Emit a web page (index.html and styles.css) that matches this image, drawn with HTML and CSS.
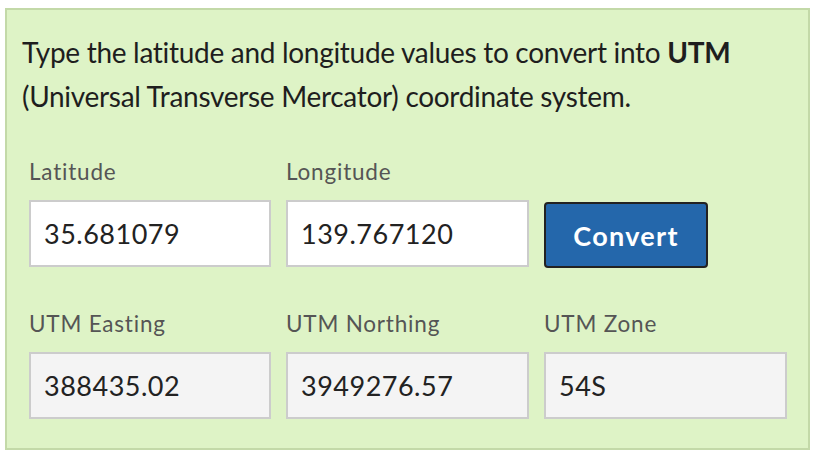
FILE: index.html
```html
<!DOCTYPE html>
<html lang="en">
<head>
  <meta charset="UTF-8" />
  <title>Lat/Long to UTM</title>
  <link rel="stylesheet" href="styles.css">
</head>
<body>
  <div class="converter">
    <p class="intro">Type the latitude and longitude values to convert into <b>UTM</b> (Universal Transverse Mercator) coordinate system.</p>

    <div class="row">
      <div class="field">
        <label for="lat">Latitude</label>
        <input id="lat" type="text" value="35.681079">
      </div>
      <div class="field">
        <label for="lon">Longitude</label>
        <input id="lon" type="text" value="139.767120">
      </div>
      <div class="field field-btn">
        <button class="convert-btn">Convert</button>
      </div>
    </div>

    <div class="row row-out">
      <div class="field">
        <label>UTM Easting</label>
        <div class="output">388435.02</div>
      </div>
      <div class="field">
        <label>UTM Northing</label>
        <div class="output">3949276.57</div>
      </div>
      <div class="field">
        <label>UTM Zone</label>
        <div class="output">54S</div>
      </div>
    </div>
  </div>
</body>
</html>
```

FILE: styles.css
```css
* {
  box-sizing: border-box;
  margin: 0;
  padding: 0;
}

body {
  font-family: Lato, 'Noto Sans', sans-serif;
  background-color: #fff;
  color: #222;
  padding: 8px 11px 0 5px;
}

/* Caja principal */
.converter {
  background-color: #def3c6;
  border: 2px solid #c3d9a8;
  padding: 20px 15px 29px 15px;
}

.intro {
  font-size: 28px;
  line-height: 44px;
  letter-spacing: -0.3px;
  color: #1e1e1e;
}

.intro b {
  font-weight: bold;
}

.row {
  display: grid;
  grid-template-columns: 242px 243px 243px;
  column-gap: 15px;
  margin: 40px 0 0 7px;
}

.row-out {
  margin-top: 43px;
}

.field label {
  display: block;
  font-size: 22.5px;
  line-height: 28px;
  letter-spacing: 0.8px;
  color: #555;
  margin-bottom: 14px;
}

.field input,
.field .output {
  display: block;
  width: 100%;
  height: 67px;
  border: 2px solid #ccc;
  background-color: #fff;
  font-family: inherit;
  font-size: 27px;
  letter-spacing: 0.5px;
  color: #222;
  padding: 0 13px;
  outline: none;
}

.field .output {
  background-color: #f4f4f4;
  line-height: 63px;
}

.field-btn {
  display: flex;
  align-items: flex-end;
}

.convert-btn {
  width: 164px;
  height: 66px;
  margin-bottom: -1px;
  background-color: #2467ab;
  color: #fff;
  border: 2px solid #222;
  border-radius: 4px;
  font-family: inherit;
  font-size: 27px;
  font-weight: bold;
  letter-spacing: 1.3px;
  cursor: pointer;
}
```
